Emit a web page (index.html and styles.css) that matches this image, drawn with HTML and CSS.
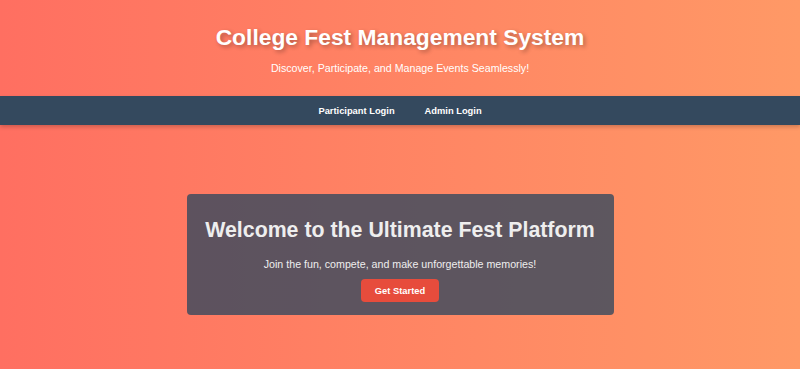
FILE: index.html
```html
<!DOCTYPE html>
<html lang="en">
<head>
<meta charset="UTF-8">
<title>College Fest Management System</title>
<link rel="stylesheet" href="styles.css">
</head>
<body>
<header class="site-header">
  <h1 class="site-title">College Fest Management System</h1>
  <p class="site-tagline">Discover, Participate, and Manage Events Seamlessly!</p>
</header>
<nav class="site-nav">
  <a class="nav-link" href="#">Participant Login</a>
  <a class="nav-link" href="#">Admin Login</a>
</nav>
<main class="hero">
  <section class="hero-card">
    <h2 class="hero-title">Welcome to the Ultimate Fest Platform</h2>
    <p class="hero-text">Join the fun, compete, and make unforgettable memories!</p>
    <a class="hero-button" href="#">Get Started</a>
  </section>
</main>
</body>
</html>
```
FILE: styles.css
```css
html, body {
  margin: 0;
  padding: 0;
}
body {
  font-family: "Liberation Sans", Arial, sans-serif;
  background: linear-gradient(to right, #ff6f61, #ff9966);
  min-height: 100vh;
  color: #fff;
}
.site-header {
  text-align: center;
  padding: 24px 20px 22px;
}
.site-title {
  margin: 0;
  font-size: 22.8px;
  font-weight: bold;
  text-shadow: 2px 2px 4px rgba(0, 0, 0, 0.3);
}
.site-tagline {
  margin: 11px 0 0;
  font-size: 10.67px;
}
.site-nav {
  background: #34495e;
  display: flex;
  justify-content: center;
  gap: 30px;
  padding: 9.5px 0;
  box-shadow: 0 2px 4px rgba(0, 0, 0, 0.2);
}
.nav-link {
  color: #fff;
  text-decoration: none;
  font-weight: bold;
  font-size: 9.33px;
}
.hero {
  display: flex;
  justify-content: center;
  padding-top: 69px;
}
.hero-card {
  background: rgba(52, 73, 94, 0.8);
  border-radius: 4px;
  padding: 24px 13px 13px;
  text-align: center;
  width: 401px;
  color: #eee;
}
.hero-title {
  margin: 0;
  font-size: 21.33px;
  font-weight: bold;
  white-space: nowrap;
}
.hero-text {
  margin: 15px 0 9px;
  font-size: 10.67px;
}
.hero-button {
  display: inline-block;
  background: #e74c3c;
  color: #fff;
  text-decoration: none;
  font-weight: bold;
  font-size: 9.33px;
  padding: 6.7px 14px;
  border-radius: 4px;
}
```
